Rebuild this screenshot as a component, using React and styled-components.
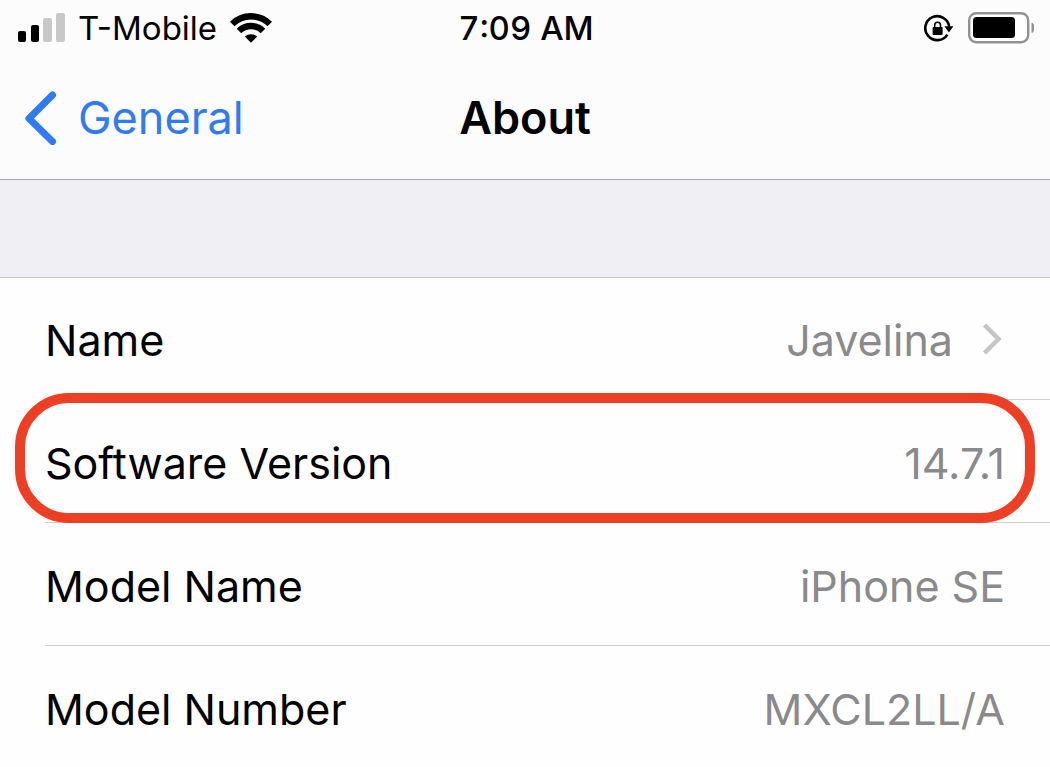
import React from "react";
import styled, { createGlobalStyle } from "styled-components";

const GlobalStyle = createGlobalStyle`
  *, *::before, *::after { box-sizing: border-box; }
  body {
    margin: 0;
    background: #fefefe;
    color: #000;
    font-family: Inter, "Liberation Sans", sans-serif;
  }
`;

const Screen = styled.div`
  overflow-x: hidden;
`;

const TopBar = styled.header`
  background: #fcfcfd;
  border-bottom: 1px solid #a9a9ac;
`;

const BarGrid = styled.div`
  display: grid;
  grid-template-columns: 1fr auto 1fr;
  align-items: center;
`;

const StatusBar = styled(BarGrid)`
  height: 56px;
  padding: 0 16px 0 18px;
  font-size: 33px;
  line-height: 40px;
`;

const NavBar = styled(BarGrid)`
  height: 123px;
  padding: 0 24px;
`;

const Cluster = styled.div`
  display: flex;
  align-items: center;
  justify-content: ${(p) => (p.$end ? "flex-end" : "flex-start")};
  gap: ${(p) => p.$gap}px;
`;

const Time = styled.time`
  font-weight: 500;
  font-variant-numeric: tabular-nums;
`;

const BackLink = styled.a`
  justify-self: start;
  display: flex;
  align-items: center;
  gap: 20px;
  color: #2f7bf6;
  font-size: 45px;
  line-height: 56px;
  text-decoration: none;
`;

const Title = styled.h1`
  margin: 0;
  font-size: 45px;
  line-height: 56px;
  font-weight: 600;
`;

const SectionGap = styled.div`
  height: 97px;
  background: #efeff4;
`;

const List = styled.dl`
  margin: 0;
  box-shadow: inset 0 1px 0 #c8c8cb;
`;

const Row = styled.div`
  position: relative;
  display: flex;
  align-items: center;
  justify-content: space-between;
  height: 123px;
  margin-left: 45px;
  padding: 4px 45px 0 0;
  border-bottom: 1px solid ${(p) => (p.$last ? "transparent" : "#d0d0d2")};
  font-size: 43px;
  line-height: 56px;
`;

const Label = styled.dt``;

const Value = styled.dd`
  margin: 0;
  color: #8a8a8c;
`;

const ValueLink = styled.a`
  display: flex;
  align-items: center;
  gap: 28px;
  color: inherit;
  text-decoration: none;
`;

const Highlight = styled.span`
  position: absolute;
  inset: -7px 15px -1px -30px;
  border: 10px solid #ee3f25;
  border-radius: 54px;
  pointer-events: none;
`;

const SignalIcon = () => (
  <svg width="47" height="30" viewBox="0 0 47 30" role="img" aria-label="Signal strength">
    <rect x="0" y="18" width="8" height="11" rx="2" />
    <rect x="13" y="12" width="8" height="17" rx="2" />
    <rect x="25" y="5" width="9" height="24" rx="2" fill="#c8c8c9" />
    <rect x="38" y="0" width="9" height="29" rx="2" fill="#c8c8c9" />
  </svg>
);

const WifiIcon = () => (
  <svg width="42" height="30" viewBox="0 0 42 30" role="img" aria-label="Wi-Fi">
    <g fill="none" stroke="#000" strokeWidth="6.4">
      <path d="M2.2 11a26.8 26.8 0 0 1 37.6 0" />
      <path d="M9 18a17 17 0 0 1 24 0" />
    </g>
    <path d="M14.8 23.6a9.1 9.1 0 0 1 12.4 0L21 29.8z" />
  </svg>
);

const RotationLockIcon = () => (
  <svg width="30" height="30" viewBox="0 0 30 30" role="img" aria-label="Rotation lock">
    <path d="M23.4 21.6A12 12 0 1 1 25.2 13.8" fill="none" stroke="#000" strokeWidth="2.6" />
    <path d="M20.4 13.2h9l-4.5 6.2z" />
    <rect x="8.6" y="14" width="10" height="8" rx="1" />
    <path d="M10.7 14.6v-2.4a2.9 2.9 0 0 1 5.8 0v2.4" fill="none" stroke="#000" strokeWidth="1.5" />
  </svg>
);

const BatteryIcon = () => (
  <svg width="66" height="32" viewBox="0 0 66 32" role="img" aria-label="Battery">
    <rect x="1.2" y="1.2" width="59" height="29" rx="7" fill="#fff" stroke="#929293" strokeWidth="2.4" />
    <rect x="5" y="5" width="42" height="21" rx="3.5" />
    <path d="M64 11c2.6 1.4 2.6 8.2 0 9.6z" fill="#929293" stroke="#929293" />
  </svg>
);

const BackChevron = () => (
  <svg width="34" height="54" viewBox="0 0 34 54" aria-hidden="true">
    <path d="M28.5 4L5 27.5L28.5 50.5" fill="none" stroke="#2f7bf6" strokeWidth="7" strokeLinecap="round" strokeLinejoin="round" />
  </svg>
);

const DisclosureChevron = () => (
  <svg width="24" height="34" viewBox="0 0 24 34" aria-hidden="true">
    <path d="M3.5 2L17.5 16L3.5 30" fill="none" stroke="#c5c5c7" strokeWidth="4.5" />
  </svg>
);

const details = [
  { label: "Name", value: "Javelina", href: "#name" },
  { label: "Software Version", value: "14.7.1", highlighted: true },
  { label: "Model Name", value: "iPhone SE" },
  { label: "Model Number", value: "MXCL2LL/A" },
];

export default function App() {
  return (
    <Screen>
      <GlobalStyle />
      <TopBar>
        <StatusBar>
          <Cluster $gap={13}>
            <SignalIcon />
            <span>T-Mobile</span>
            <WifiIcon />
          </Cluster>
          <Time>7:09 AM</Time>
          <Cluster $gap={14} $end>
            <RotationLockIcon />
            <BatteryIcon />
          </Cluster>
        </StatusBar>
        <NavBar as="nav">
          <BackLink href="#general">
            <BackChevron />
            General
          </BackLink>
          <Title>About</Title>
        </NavBar>
      </TopBar>
      <main>
        <SectionGap />
        <List>
          {details.map((item, i) => (
            <Row key={item.label} $last={i === details.length - 1}>
              <Label>{item.label}</Label>
              <Value>
                {item.href ? (
                  <ValueLink href={item.href}>
                    {item.value}
                    <DisclosureChevron />
                  </ValueLink>
                ) : (
                  item.value
                )}
                {item.highlighted && <Highlight />}
              </Value>
            </Row>
          ))}
        </List>
      </main>
    </Screen>
  );
}
